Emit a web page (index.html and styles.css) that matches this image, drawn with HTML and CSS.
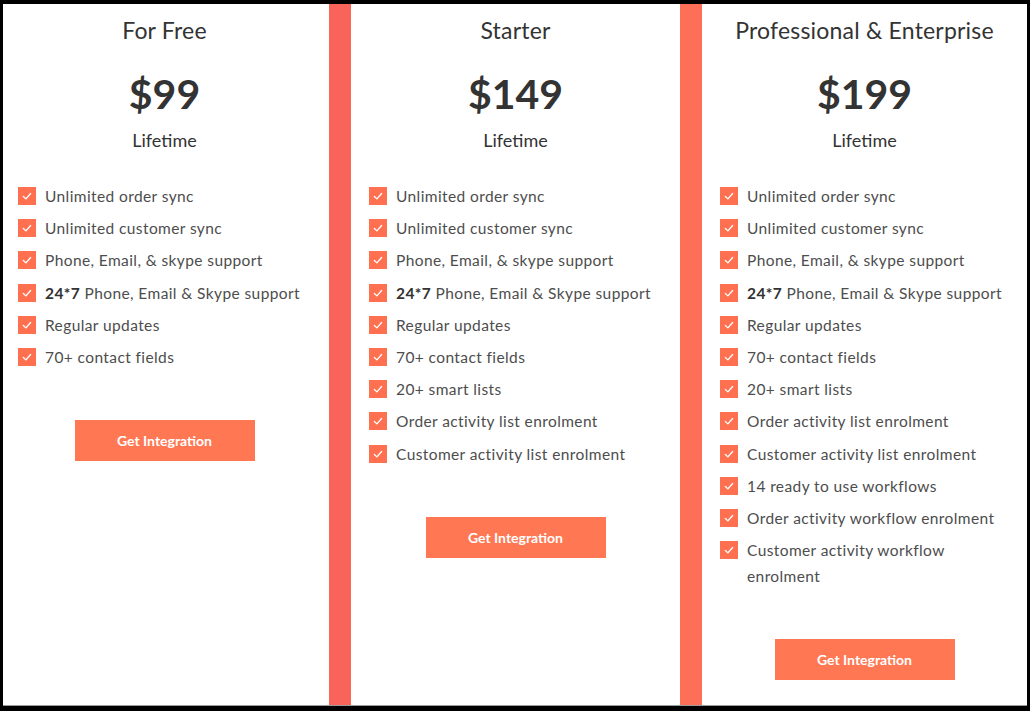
FILE: index.html
```html
<!DOCTYPE html>
<html lang="en">
<head>
<meta charset="utf-8">
<title>Pricing</title>
<link rel="stylesheet" href="styles.css">
</head>
<body>
<div class="frame">
  <section class="plan plan-first">
    <h2 class="plan-title">For Free</h2>
    <div class="plan-price">$99</div>
    <div class="plan-term">Lifetime</div>
    <ul class="features">
      <li><span class="tick"><svg viewBox="0 0 10 10"><path d="M3 5.3 L4.4 6.6 L7 3.6"/></svg></span><span>Unlimited order sync</span></li>
      <li><span class="tick"><svg viewBox="0 0 10 10"><path d="M3 5.3 L4.4 6.6 L7 3.6"/></svg></span><span>Unlimited customer sync</span></li>
      <li><span class="tick"><svg viewBox="0 0 10 10"><path d="M3 5.3 L4.4 6.6 L7 3.6"/></svg></span><span>Phone, Email, &amp; skype support</span></li>
      <li><span class="tick"><svg viewBox="0 0 10 10"><path d="M3 5.3 L4.4 6.6 L7 3.6"/></svg></span><span><b>24*7</b> Phone, Email &amp; Skype support</span></li>
      <li><span class="tick"><svg viewBox="0 0 10 10"><path d="M3 5.3 L4.4 6.6 L7 3.6"/></svg></span><span>Regular updates</span></li>
      <li><span class="tick"><svg viewBox="0 0 10 10"><path d="M3 5.3 L4.4 6.6 L7 3.6"/></svg></span><span>70+ contact fields</span></li>
    </ul>
    <a class="cta" href="#">Get Integration</a>
  </section>
  <div class="divider divider-red"></div>
  <section class="plan plan-second">
    <h2 class="plan-title">Starter</h2>
    <div class="plan-price">$149</div>
    <div class="plan-term">Lifetime</div>
    <ul class="features">
      <li><span class="tick"><svg viewBox="0 0 10 10"><path d="M3 5.3 L4.4 6.6 L7 3.6"/></svg></span><span>Unlimited order sync</span></li>
      <li><span class="tick"><svg viewBox="0 0 10 10"><path d="M3 5.3 L4.4 6.6 L7 3.6"/></svg></span><span>Unlimited customer sync</span></li>
      <li><span class="tick"><svg viewBox="0 0 10 10"><path d="M3 5.3 L4.4 6.6 L7 3.6"/></svg></span><span>Phone, Email, &amp; skype support</span></li>
      <li><span class="tick"><svg viewBox="0 0 10 10"><path d="M3 5.3 L4.4 6.6 L7 3.6"/></svg></span><span><b>24*7</b> Phone, Email &amp; Skype support</span></li>
      <li><span class="tick"><svg viewBox="0 0 10 10"><path d="M3 5.3 L4.4 6.6 L7 3.6"/></svg></span><span>Regular updates</span></li>
      <li><span class="tick"><svg viewBox="0 0 10 10"><path d="M3 5.3 L4.4 6.6 L7 3.6"/></svg></span><span>70+ contact fields</span></li>
      <li><span class="tick"><svg viewBox="0 0 10 10"><path d="M3 5.3 L4.4 6.6 L7 3.6"/></svg></span><span>20+ smart lists</span></li>
      <li><span class="tick"><svg viewBox="0 0 10 10"><path d="M3 5.3 L4.4 6.6 L7 3.6"/></svg></span><span>Order activity list enrolment</span></li>
      <li><span class="tick"><svg viewBox="0 0 10 10"><path d="M3 5.3 L4.4 6.6 L7 3.6"/></svg></span><span>Customer activity list enrolment</span></li>
    </ul>
    <a class="cta" href="#">Get Integration</a>
  </section>
  <div class="divider divider-orange"></div>
  <section class="plan">
    <h2 class="plan-title">Professional &amp; Enterprise</h2>
    <div class="plan-price">$199</div>
    <div class="plan-term">Lifetime</div>
    <ul class="features">
      <li><span class="tick"><svg viewBox="0 0 10 10"><path d="M3 5.3 L4.4 6.6 L7 3.6"/></svg></span><span>Unlimited order sync</span></li>
      <li><span class="tick"><svg viewBox="0 0 10 10"><path d="M3 5.3 L4.4 6.6 L7 3.6"/></svg></span><span>Unlimited customer sync</span></li>
      <li><span class="tick"><svg viewBox="0 0 10 10"><path d="M3 5.3 L4.4 6.6 L7 3.6"/></svg></span><span>Phone, Email, &amp; skype support</span></li>
      <li><span class="tick"><svg viewBox="0 0 10 10"><path d="M3 5.3 L4.4 6.6 L7 3.6"/></svg></span><span><b>24*7</b> Phone, Email &amp; Skype support</span></li>
      <li><span class="tick"><svg viewBox="0 0 10 10"><path d="M3 5.3 L4.4 6.6 L7 3.6"/></svg></span><span>Regular updates</span></li>
      <li><span class="tick"><svg viewBox="0 0 10 10"><path d="M3 5.3 L4.4 6.6 L7 3.6"/></svg></span><span>70+ contact fields</span></li>
      <li><span class="tick"><svg viewBox="0 0 10 10"><path d="M3 5.3 L4.4 6.6 L7 3.6"/></svg></span><span>20+ smart lists</span></li>
      <li><span class="tick"><svg viewBox="0 0 10 10"><path d="M3 5.3 L4.4 6.6 L7 3.6"/></svg></span><span>Order activity list enrolment</span></li>
      <li><span class="tick"><svg viewBox="0 0 10 10"><path d="M3 5.3 L4.4 6.6 L7 3.6"/></svg></span><span>Customer activity list enrolment</span></li>
      <li><span class="tick"><svg viewBox="0 0 10 10"><path d="M3 5.3 L4.4 6.6 L7 3.6"/></svg></span><span>14 ready to use workflows</span></li>
      <li><span class="tick"><svg viewBox="0 0 10 10"><path d="M3 5.3 L4.4 6.6 L7 3.6"/></svg></span><span>Order activity workflow enrolment</span></li>
      <li><span class="tick"><svg viewBox="0 0 10 10"><path d="M3 5.3 L4.4 6.6 L7 3.6"/></svg></span><span>Customer activity workflow enrolment</span></li>
    </ul>
    <a class="cta" href="#">Get Integration</a>
  </section>
</div>
</body>
</html>
```

FILE: styles.css
```css
* { box-sizing: border-box; }

html, body {
  margin: 0;
  padding: 0;
  background: #000;
}

body {
  width: 1030px;
  height: 711px;
  padding: 4px 3px 5px 3px;
  font-family: "Lato", "Open Sans", sans-serif;
  color: #444;
}

.frame {
  display: flex;
  height: 702px;
  background: #fff;
  border-bottom: 1px solid #9a9a9a;
}

.plan {
  flex: 1 1 0;
  display: flex;
  flex-direction: column;
  align-items: center;
  padding: 11px 18px 0 18px;
}

.plan-first {
  flex: 0 0 326px;
  padding-left: 15px;
}

.plan-second {
  flex: 0 0 329px;
}

.divider {
  width: 22px;
  flex: 0 0 22px;
}

.divider-red { background: #f8645a; }
.divider-orange { background: #fe6f58; }

.plan-title {
  margin: 0;
  font-size: 23px;
  line-height: 30px;
  font-weight: 400;
  color: #333;
  text-align: center;
  letter-spacing: 0.2px;
}

.plan-price {
  margin-top: 25px;
  font-size: 41px;
  line-height: 48px;
  font-weight: 700;
  color: #333;
}

.plan-term {
  margin-top: 10px;
  font-size: 18px;
  line-height: 24px;
  color: #333;
}

.features {
  list-style: none;
  margin: 31px 0 0 0;
  padding: 0;
  align-self: stretch;
}

.features li {
  display: flex;
  align-items: flex-start;
  gap: 9px;
  margin-bottom: 6.2px;
  font-size: 15.5px;
  line-height: 26px;
  letter-spacing: 0.4px;
  color: #4d4d4d;
}

.features li:last-child { margin-bottom: 0; }

.features b {
  font-weight: 700;
  color: #333;
}

.tick {
  flex: 0 0 18px;
  width: 18px;
  height: 18px;
  margin-top: 4px;
  background: #ff7050;
  display: flex;
}

.tick svg {
  width: 18px;
  height: 18px;
}

.tick path {
  fill: none;
  stroke: #fff;
  stroke-width: 0.75;
  stroke-linecap: round;
  stroke-linejoin: round;
}

.cta {
  margin-top: 50px;
  width: 180px;
  height: 41px;
  display: flex;
  align-items: center;
  justify-content: center;
  background: #ff7753;
  color: #fff;
  font-size: 14px;
  font-weight: 700;
  text-decoration: none;
}
```
